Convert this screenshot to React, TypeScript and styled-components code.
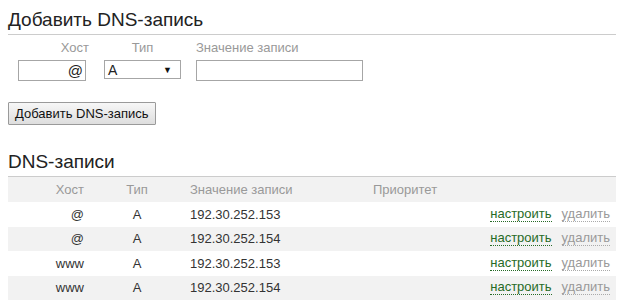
import styled, { createGlobalStyle } from "styled-components";

const GlobalStyle = createGlobalStyle`
    body {
        margin: 0;
        background: #fff;
        font-family: "Liberation Sans", Arial, sans-serif;
        color: #333;
    }
`;

const Page = styled.div`
    width: 608px;
    padding: 8px 10px 0 8px;
`;

const Heading = styled.h2<{ $top?: number }>`
    margin: ${({ $top }) => $top ?? 0}px 0 0;
    padding-bottom: 3px;
    font-size: 19px;
    line-height: 23px;
    font-weight: normal;
    color: #222;
    border-bottom: 1px solid #cccccc;
`;

const Form = styled.div`
    display: flex;
    margin: 5px 0 0 10px;
`;

const Field = styled.div<{ $width: number; $align: string; $gap?: number }>`
    display: flex;
    flex-direction: column;
    gap: 5px;
    width: ${({ $width }) => $width}px;
    margin-left: ${({ $gap }) => $gap ?? 0}px;
    text-align: ${({ $align }) => $align};
`;

const Label = styled.div<{ $shift?: number }>`
    font-size: 13px;
    line-height: 15px;
    color: #999;
    margin-right: ${({ $shift }) => $shift ?? 0}px;
`;

const TextInput = styled.input`
    box-sizing: border-box;
    width: 100%;
    height: 21px;
    margin: 0;
    padding: 0 2px;
    border: 1px solid #a6a6a6;
    font-family: inherit;
    font-size: 15px;
    color: #222;
    text-align: right;
    outline: none;
`;

const SelectBox = styled.div`
    box-sizing: border-box;
    display: flex;
    align-items: center;
    justify-content: space-between;
    height: 19px;
    padding: 0 8px 0 3px;
    border: 1px solid #a6a6a6;
    font-size: 14px;
    color: #222;
    text-align: left;
`;

const Arrow = styled.span`
    font-size: 9px;
    color: #111;
`;

const Button = styled.button`
    margin-top: 21px;
    height: 23px;
    padding: 0 6px;
    border: 1px solid #9a9a9a;
    border-radius: 1px;
    background: linear-gradient(#f7f7f7, #dedede);
    font-family: inherit;
    font-size: 13px;
    color: #111;
`;

const Table = styled.div`
    display: flex;
    flex-direction: column;
`;

const Row = styled.div<{ $shade: boolean; $head?: boolean }>`
    display: grid;
    grid-template-columns: 76px 106px 183px 100px 1fr;
    align-items: center;
    height: ${({ $head }) => ($head ? 25 : 24.5)}px;
    background: ${({ $shade }) => ($shade ? "#f2f2f2" : "#fff")};
    font-size: 13px;
    color: ${({ $head }) => ($head ? "#999" : "#333")};
`;

const Host = styled.div`
    text-align: right;
`;

const Type = styled.div`
    text-align: center;
`;

const Actions = styled.div`
    display: flex;
    justify-content: flex-end;
    gap: 10px;
    padding-right: 6px;
    font-size: 13px;
`;

const Action = styled.a<{ $green?: boolean }>`
    color: ${({ $green }) => ($green ? "#276b27" : "#999")};
    text-decoration: none;
    border-bottom: 1px dotted ${({ $green }) => ($green ? "#276b27" : "#aaa")};
    line-height: 14px;
`;

const records = [
    { host: "@", value: "192.30.252.153" },
    { host: "@", value: "192.30.252.154" },
    { host: "www", value: "192.30.252.153" },
    { host: "www", value: "192.30.252.154" },
];

export default function App() {
    return (
        <Page>
            <GlobalStyle />
            <Heading>Добавить DNS-запись</Heading>
            <Form>
                <Field $width={68} $align="right">
                    <Label $shift={-3}>Хост</Label>
                    <TextInput defaultValue="@" readOnly />
                </Field>
                <Field $width={77} $align="center" $gap={18}>
                    <Label>Тип</Label>
                    <SelectBox>
                        A<Arrow>▼</Arrow>
                    </SelectBox>
                </Field>
                <Field $width={167} $align="left" $gap={15}>
                    <Label>Значение записи</Label>
                    <TextInput readOnly />
                </Field>
            </Form>
            <Button>Добавить DNS-запись</Button>
            <Heading $top={25}>DNS-записи</Heading>
            <Table>
                <Row $shade $head>
                    <Host>Хост</Host>
                    <Type>Тип</Type>
                    <div>Значение записи</div>
                    <div>Приоритет</div>
                    <div />
                </Row>
                {records.map((r, i) => (
                    <Row key={i} $shade={i % 2 === 1}>
                        <Host>{r.host}</Host>
                        <Type>A</Type>
                        <div>{r.value}</div>
                        <div />
                        <Actions>
                            <Action $green>настроить</Action>
                            <Action>удалить</Action>
                        </Actions>
                    </Row>
                ))}
            </Table>
        </Page>
    );
}
